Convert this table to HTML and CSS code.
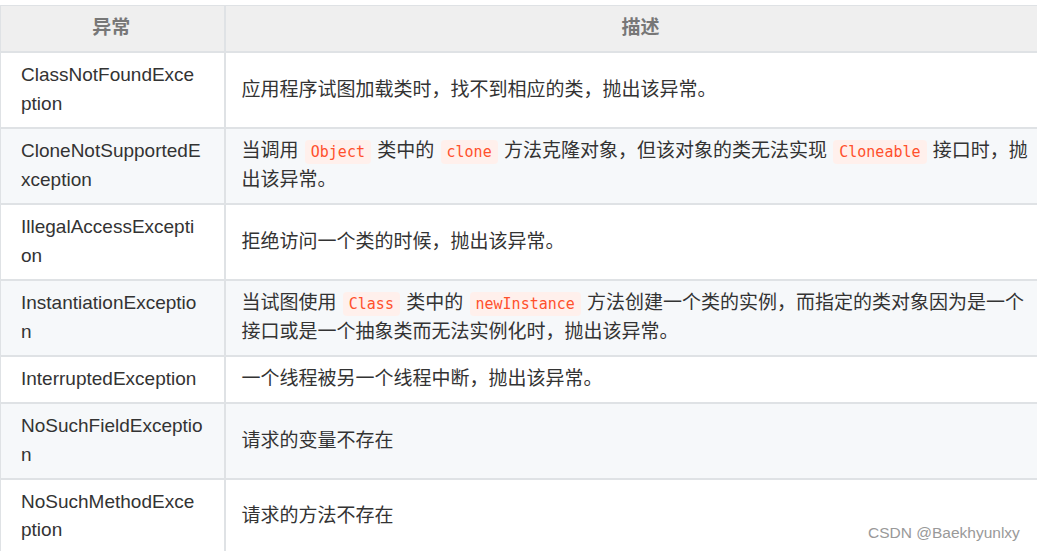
FILE: index.html
```html
<!DOCTYPE html>
<html lang="zh-CN">
<head>
<meta charset="utf-8">
<title>异常</title>
<link rel="stylesheet" href="styles.css">
</head>
<body>
<div class="page">
  <table class="exc-table">
    <colgroup>
      <col class="col-name">
      <col class="col-desc">
    </colgroup>
    <thead>
      <tr><th>异常</th><th>描述</th></tr>
    </thead>
    <tbody>
      <tr><td class="name">ClassNotFoundException</td><td>应用程序试图加载类时，找不到相应的类，抛出该异常。</td></tr>
      <tr><td class="name">CloneNotSupportedException</td><td>当调用 <code>Object</code> 类中的 <code>clone</code> 方法克隆对象，但该对象的类无法实现 <code>Cloneable</code> 接口时，抛出该异常。</td></tr>
      <tr><td class="name">IllegalAccessException</td><td>拒绝访问一个类的时候，抛出该异常。</td></tr>
      <tr><td class="name">InstantiationException</td><td>当试图使用 <code>Class</code> 类中的 <code>newInstance</code> 方法创建一个类的实例，而指定的类对象因为是一个接口或是一个抽象类而无法实例化时，抛出该异常。</td></tr>
      <tr><td class="name">InterruptedException</td><td>一个线程被另一个线程中断，抛出该异常。</td></tr>
      <tr><td class="name">NoSuchFieldException</td><td>请求的变量不存在</td></tr>
      <tr><td class="name">NoSuchMethodException</td><td>请求的方法不存在</td></tr>
    </tbody>
  </table>
  <div class="watermark">CSDN @Baekhyunlxy</div>
</div>
</body>
</html>
```
FILE: styles.css
```css
html, body {
  margin: 0;
  padding: 0;
  background: #ffffff;
  overflow: hidden;
}

.page {
  position: relative;
  width: 1037px;
  height: 551px;
  overflow: hidden;
  padding-top: 5px;
  box-sizing: border-box;
}

.exc-table {
  border-collapse: collapse;
  table-layout: fixed;
  width: 1058px;
  font-family: "Liberation Sans", "Noto Sans CJK SC", sans-serif;
  font-size: 19px;
  line-height: 28.5px;
  color: #333333;
}

.col-name { width: 224px; }
.col-desc { width: 834px; }

.exc-table th,
.exc-table td {
  border: 2px solid #dfe2e5;
  padding: 8.25px 18px 8.25px 16px;
  text-align: left;
  vertical-align: middle;
}

.exc-table td.name {
  padding-left: 20px;
  padding-right: 20px;
  word-break: break-all;
}

.exc-table th {
  background: #efefef;
  color: #777777;
  font-weight: bold;
  text-align: center;
  border-top-width: 1px;
}

.exc-table tr > :first-child {
  border-left-width: 1px;
}

.exc-table tbody tr:nth-child(even) td {
  background: #f6f8fa;
}

.exc-table code {
  font-family: "DejaVu Sans Mono", "Liberation Mono", monospace;
  font-size: 15px;
  color: #ff502c;
  background: #fff0ec;
  padding: 3px 6px;
  border-radius: 4px;
  margin: 0 1px;
}

.watermark {
  position: absolute;
  left: 868px;
  top: 524px;
  font-family: "Liberation Sans", sans-serif;
  font-size: 15.5px;
  color: #999999;
  white-space: nowrap;
}
```
